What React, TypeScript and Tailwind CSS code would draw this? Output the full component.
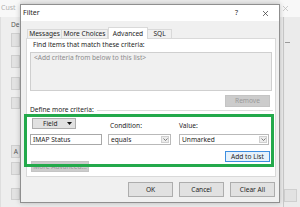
const Chevron = () => (
  <svg width="5" height="3" viewBox="0 0 5 3" className="block">
    <path d="M0.5 0.5 L2.5 2.5 L4.5 0.5" fill="none" stroke="#606060" strokeWidth="0.8" />
  </svg>
);

const Combo = ({ text, className }: { text: string; className: string }) => (
  <div className={`flex h-[11px] items-stretch border border-[#b9b9b9] bg-white ${className}`}>
    <span className="flex-1 truncate pl-[2px] leading-[9px]">{text}</span>
    <div className="m-px flex w-[8px] items-center justify-center border border-[#d0d0d0] bg-[#ececec]">
      <Chevron />
    </div>
  </div>
);

const App = () => {
  return (
    <div className="relative h-[207px] w-[300px] overflow-hidden bg-[#ececec] font-['Noto_Sans','Open_Sans',sans-serif] text-[6.6px] text-[#1e1e1e]">
      {/* window behind, left strip */}
      <div className="absolute left-0 top-0 flex h-full w-[20px] flex-col">
        <div className="flex h-[17px] items-center bg-[#f8f8f8] pl-px text-[7px] text-[#b0b0b0]">Cust</div>
        <div className="flex flex-1 flex-col border-l border-[#dedede] bg-[#eeeeee] pl-[10px]">
          <span className="mt-[4px] h-[8px] leading-[8px] text-[#5a5a5a]">De</span>
          <div className="mt-[4px] h-[14px] w-full border border-[#cfcfcf] bg-[#e2e2e2]" />
          <div className="mt-[8px] h-[13px] w-full border border-[#cfcfcf] bg-[#e2e2e2]" />
          <div className="mt-[9px] h-[13px] w-full border border-[#cfcfcf] bg-[#e2e2e2]" />
          <div className="mt-[7px] h-[12px] w-full border border-[#cfcfcf] bg-[#e2e2e2]" />
          <div className="mt-[36px] flex h-[13px] w-full items-center justify-end border border-[#cfcfcf] bg-[#e2e2e2] pr-px text-[#555]">A</div>
          <div className="mt-[4px] h-[13px] w-full border border-[#cfcfcf] bg-[#e2e2e2]" />
          <div className="mt-[13px] h-[12px] w-full border border-[#cfcfcf] bg-[#e2e2e2]" />
        </div>
      </div>

      {/* window behind, right strip */}
      <div className="absolute left-[280px] top-0 flex h-full w-[20px] flex-col">
        <div className="flex h-[17px] items-center bg-[#f8f8f8] pl-[3px]">
          <svg width="5" height="5" viewBox="0 0 5 5">
            <path d="M0 0 L5 5 M5 0 L0 5" stroke="#b8b8b8" strokeWidth="0.7" />
          </svg>
        </div>
        <div className="ml-[3px] flex flex-1 flex-col border-l border-[#c9c9c9] bg-[#ebebeb]">
          <div className="ml-px mt-[25px] h-px w-[5px] border-t border-dashed border-[#9a9a9a]" />
          <div className="mt-[146px] h-[13px] w-[13px] border border-[#cfcfcf] bg-[#e2e2e2]" />
        </div>
      </div>

      {/* Filter dialog */}
      <div className="absolute left-[20px] top-[4px] flex h-[199px] w-[260px] flex-col border border-[#8f8f8f] bg-[#f0f0f0] shadow-[0_0_5px_rgba(0,0,0,0.22)]">
        <div className="flex h-[16px] items-center bg-white pl-[2px] pr-[11px]">
          <span className="text-[7px]">Filter</span>
          <span className="ml-auto text-[7px]">?</span>
          <svg width="5" height="5" viewBox="0 0 5 5" className="ml-[25px]">
            <path d="M0 0 L5 5 M5 0 L0 5" stroke="#333" strokeWidth="0.7" />
          </svg>
        </div>

        <div className="relative z-10 ml-[6px] mt-[6px] flex h-[11px] items-end">
          <div className="flex h-[9px] w-[35px] items-center justify-center border border-b-0 border-[#d9d9d9] bg-[#f0f0f0]">Messages</div>
          <div className="flex h-[9px] w-[46px] items-center justify-center border border-b-0 border-l-0 border-[#d9d9d9] bg-[#f0f0f0]">More Choices</div>
          <div className="-mb-px flex h-[12px] w-[40px] items-center justify-center border border-b-0 border-[#d9d9d9] bg-white">Advanced</div>
          <div className="flex h-[9px] w-[24px] items-center justify-center border border-b-0 border-l-0 border-[#d9d9d9] bg-[#f0f0f0]">SQL</div>
        </div>

        <div className="ml-[5px] flex h-[139px] w-[250px] flex-col border border-[#d9d9d9] bg-white">
          <p className="ml-[6px] mt-[2px] h-[8px] leading-[8px]">Find items that match these criteria:</p>
          <div className="ml-[3px] mt-[3px] h-[39px] w-[242px] border border-[#cfcfcf] bg-[#f0f0f0] pl-[3px] pt-px leading-[8px] text-[#8c8c8c]">
            &lt;Add criteria from below to this list&gt;
          </div>
          <div className="mt-[4px] flex justify-end pr-[5px]">
            <div className="flex h-[12px] w-[45px] items-center justify-center border border-[#c4c4c4] bg-[#cccccc] text-[#9a9a9a]">Remove</div>
          </div>
          <div className="-mt-px flex h-[8px] items-center pl-[3px] pr-[2px]">
            <span className="leading-[8px]">Define more criteria:</span>
            <div className="ml-[3px] h-px flex-1 bg-[#dcdcdc]" />
          </div>

          <div className="mt-[4px] flex h-[12px] pl-[3px]">
            <div className="w-[72px]">
              <div className="ml-[2px] flex h-[11px] w-[44px] items-center border border-[#adadad] bg-[#e1e1e1]">
                <span className="ml-[10px]">Field</span>
                <svg width="5" height="3" viewBox="0 0 5 3" className="ml-auto mr-[3px]">
                  <path d="M0 0 L5 0 L2.5 3 Z" fill="#111" />
                </svg>
              </div>
            </div>
            <span className="ml-[8px] w-[61px] self-end leading-[8px]">Condition:</span>
            <span className="ml-[8px] self-end leading-[8px]">Value:</span>
          </div>

          <div className="mt-[4px] flex pl-[3px]">
            <div className="h-[11px] w-[72px] border border-[#a8a8a8] bg-white pl-[2px] leading-[9px]">IMAP Status</div>
            <Combo text="equals" className="ml-[6px] w-[63px]" />
            <Combo text="Unmarked" className="ml-[8px] w-[90px]" />
          </div>

          <div className="mt-[6px] flex justify-end pr-[5px]">
            <div className="flex h-[11px] w-[45px] items-center justify-center border border-[#3d8ee0] bg-[#e5f1fb]">Add to List</div>
          </div>
          <div className="-mt-px ml-[4px] flex h-[11px] w-[58px] items-center justify-center border border-[#c4c4c4] bg-[#cccccc] text-[#9a9a9a]">
            More Advanced...
          </div>
        </div>

        <div className="mt-[5px] flex justify-end gap-[6px] pr-[4px]">
          <div className="flex h-[15px] w-[45px] items-center justify-center border border-[#adadad] bg-[#e1e1e1]">OK</div>
          <div className="flex h-[15px] w-[45px] items-center justify-center border border-[#adadad] bg-[#e1e1e1]">Cancel</div>
          <div className="flex h-[15px] w-[45px] items-center justify-center border border-[#adadad] bg-[#e1e1e1]">Clear All</div>
        </div>
      </div>

      {/* green highlight drawn over the criteria area */}
      <div className="absolute left-[24px] top-[114px] h-[53px] w-[250px] border-[3px] border-[#23a94b]" />
    </div>
  );
};

export default App;
